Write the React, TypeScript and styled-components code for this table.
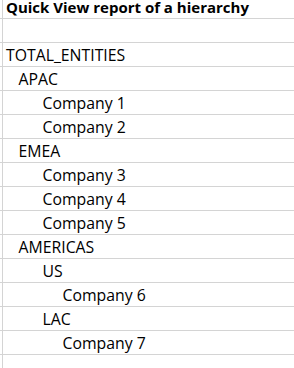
import React from "react";
import styled, { createGlobalStyle } from "styled-components";

const GlobalStyle = createGlobalStyle`
  html, body { margin: 0; padding: 0; background: #ffffff; }
  body { font-family: "Open Sans", "Liberation Sans", sans-serif; }
`;

const Sheet = styled.div`
  width: 294px;
  height: 368px;
  overflow: hidden;
  display: flex;
  flex-direction: column;
  background: #fff;
`;

const Row = styled.div<{ $height: number }>`
  display: flex;
  flex: none;
  height: ${(p) => p.$height}px;
  border-bottom: 1px solid #d4d4d4;
  box-sizing: border-box;
`;

const Gutter = styled.div`
  width: 2px;
  flex: none;
`;

const Cell = styled.div<{ $indent: number }>`
  flex: 1;
  display: flex;
  align-items: flex-end;
  border-left: 1px solid #d4d4d4;
  padding: 0 0 1px ${(p) => 3 + p.$indent}px;
  font-size: 15.8px;
  line-height: 20px;
  color: #000;
  white-space: nowrap;
`;

const TitleCell = styled(Cell)`
  padding-bottom: 3px;
  font-size: 15px;
  line-height: 15px;
  font-weight: 700;
`;

const levels = [0, 12.5, 36.5, 56.5];

const rows: { text: string; level: number }[] = [
  { text: "", level: 0 },
  { text: "TOTAL_ENTITIES", level: 0 },
  { text: "APAC", level: 1 },
  { text: "Company 1", level: 2 },
  { text: "Company 2", level: 2 },
  { text: "EMEA", level: 1 },
  { text: "Company 3", level: 2 },
  { text: "Company 4", level: 2 },
  { text: "Company 5", level: 2 },
  { text: "AMERICAS", level: 1 },
  { text: "US", level: 2 },
  { text: "Company 6", level: 3 },
  { text: "LAC", level: 2 },
  { text: "Company 7", level: 3 },
  { text: "", level: 0 },
];

export default function App() {
  return (
    <>
      <GlobalStyle />
      <Sheet>
        <Row $height={19}>
          <Gutter />
          <TitleCell $indent={0}>Quick View report of a hierarchy</TitleCell>
        </Row>
        {rows.map((r, i) => (
          <Row key={i} $height={24}>
            <Gutter />
            <Cell $indent={levels[r.level]}>{r.text}</Cell>
          </Row>
        ))}
      </Sheet>
    </>
  );
}
